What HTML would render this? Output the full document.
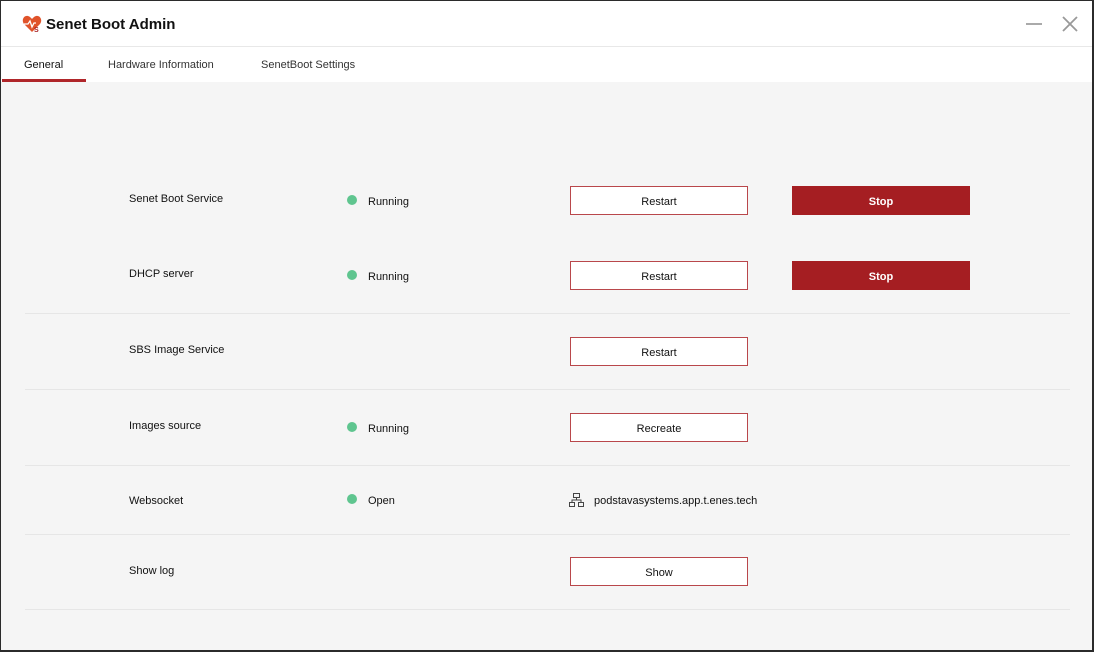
<!DOCTYPE html><html><head><style>
body{margin:0;width:1094px;height:652px;overflow:hidden;font-family:"Liberation Sans",sans-serif;background:#2b2b2b}
.win{position:absolute;left:1px;top:1px;width:1091px;height:649px;background:#f5f5f5}
.head{position:absolute;left:0;top:0;width:100%;height:45px;background:#fff;border-bottom:1px solid #e8e8e8}
.tabs{position:absolute;left:0;top:46px;width:100%;height:35px;background:#fff}
.t{position:absolute;top:12px;font-size:11px;color:#333}
.ab{position:absolute;font-size:11px;color:#111}
.btn{position:absolute;width:176px;height:27px;border:1px solid #b9474b;background:#fff;font-size:11px;color:#111;text-align:center;line-height:30px;box-sizing:content-box}
.stop{background:#a51e22;border-color:#a51e22;color:#fff;font-weight:bold}
.dot{position:absolute;width:10px;height:10px;border-radius:50%;background:#5fc58f}
.sep{position:absolute;left:24px;width:1045px;height:1px;background:#e6e6e6}
</style></head><body><div class="win">
<div class="head">
<svg style="position:absolute;left:21px;top:14px" width="20" height="18" viewBox="0 0 20 18"><path d="M10 17 L2 9 C-1 5 2 0 6 1 C8 1.5 9 3 10 4 C11 3 12 1.5 14 1 C18 0 21 5 18 9 Z" fill="#e0532a"/><path d="M2 9 H6 L8 6 L10 12 L12 8 H14" stroke="#fff" stroke-width="1.3" fill="none"/><text x="12" y="17" font-size="7" font-weight="bold" fill="#a51e22" font-family="Liberation Sans">S</text></svg>
<div style="position:absolute;left:45px;top:15px;font-size:15px;font-weight:bold;color:#111">Senet Boot Admin</div>
<div style="position:absolute;left:1025px;top:22px;width:16px;height:2px;background:#aaa"></div>
<svg style="position:absolute;left:1061px;top:15px" width="16" height="16"><path d="M1 1L15 15M15 1L1 15" stroke="#999" stroke-width="1.8"/></svg>
</div>
<div class="tabs">
<div class="t" style="left:23px;color:#111">General</div>
<div class="t" style="left:107px">Hardware Information</div>
<div class="t" style="left:260px">SenetBoot Settings</div>
<div style="position:absolute;left:1px;top:32px;width:84px;height:3px;background:#b0262a"></div>
</div>

<div class="ab" style="left:128px;top:192px">Senet Boot Service</div>
<div class="dot" style="left:346px;top:194px"></div><div class="ab" style="left:367px;top:195px">Running</div>
<div class="btn" style="left:569px;top:185px">Restart</div>
<div class="btn stop" style="left:791px;top:185px">Stop</div>

<div class="ab" style="left:128px;top:267px">DHCP server</div>
<div class="dot" style="left:346px;top:269px"></div><div class="ab" style="left:367px;top:270px">Running</div>
<div class="btn" style="left:569px;top:260px">Restart</div>
<div class="btn stop" style="left:791px;top:260px">Stop</div>
<div class="sep" style="top:312px"></div>

<div class="ab" style="left:128px;top:343px">SBS Image Service</div>
<div class="btn" style="left:569px;top:336px">Restart</div>
<div class="sep" style="top:388px"></div>

<div class="ab" style="left:128px;top:419px">Images source</div>
<div class="dot" style="left:346px;top:421px"></div><div class="ab" style="left:367px;top:422px">Running</div>
<div class="btn" style="left:569px;top:412px">Recreate</div>
<div class="sep" style="top:464px"></div>

<div class="ab" style="left:128px;top:494px">Websocket</div>
<div class="dot" style="left:346px;top:493px"></div><div class="ab" style="left:367px;top:494px">Open</div>
<svg style="position:absolute;left:568px;top:492px" width="15" height="15" viewBox="0 0 15 15" fill="none" stroke="#444" stroke-width="1"><rect x="4.5" y="0.5" width="6" height="4"/><rect x="0.5" y="9.5" width="5" height="4"/><rect x="9.5" y="9.5" width="5" height="4"/><path d="M7.5 4.5V7M3 9.5V7H12V9.5"/></svg>
<div class="ab" style="left:593px;top:494px;color:#111">podstavasystems.app.t.enes.tech</div>
<div class="sep" style="top:533px"></div>

<div class="ab" style="left:128px;top:564px">Show log</div>
<div class="btn" style="left:569px;top:556px">Show</div>
<div class="sep" style="top:608px"></div>
</div></body></html>
